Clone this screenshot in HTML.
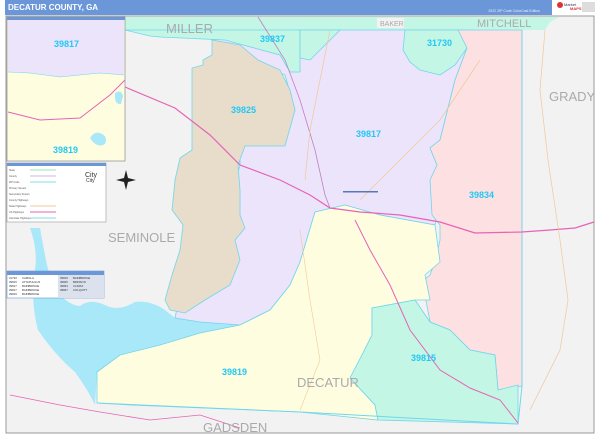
<!DOCTYPE html>
<html><head><meta charset="utf-8"><style>
html,body{margin:0;padding:0;background:#fff;}
svg{display:block;}
text{font-family:"Liberation Sans",sans-serif;}
.z{fill:#22c8f4;font-weight:bold;font-size:9px;}
.c{fill:#aaa;font-size:13px;}
</style></head><body>
<svg width="600" height="438" viewBox="0 0 600 438" xmlns="http://www.w3.org/2000/svg">
<rect width="600" height="438" fill="#fff"/>
<rect x="5" y="0" width="547" height="15" fill="#6b97d9"/>
<text x="8" y="10" fill="#fff" font-size="8" font-weight="bold">DECATUR COUNTY, GA</text>
<text x="540" y="12" fill="#e8efff" font-size="3.5" text-anchor="end">2022 ZIP Code ColorCast Edition</text>
<rect x="553" y="1" width="44" height="13" fill="#fff"/>
<circle cx="560" cy="5" r="3" fill="#d33"/>
<text x="564" y="6" font-size="4" fill="#336">Market</text>
<text x="570" y="10" font-size="4" fill="#d33" font-weight="bold">MAPS</text>
<rect x="582" y="2" width="13" height="10" fill="#ddd"/>
<rect x="6" y="16" width="588" height="417" fill="#f2f2f2" stroke="#999" stroke-width="1"/>
<rect x="125" y="17" width="434" height="13" fill="#c4f6e6"/>
<polygon points="559,17 593,17 593,30 560,30 545,30 550,22" fill="#f2f2f2"/>
<!-- lake -->
<path d="M30,228 Q38,250 35,270 Q30,300 38,330 Q55,355 75,372 Q88,390 95,405 L97,372 Q120,355 160,345 Q200,333 240,325 L175,318 L165,310 Q150,300 135,302 Q118,312 105,305 Q90,298 80,306 Q68,305 58,292 Q48,275 45,255 Q42,240 40,228 Z" fill="#a8e8f8"/>
<!-- purple 39817 -->
<polygon points="212,40 300,30 400,30 470,30 467,48 455,80 440,140 430,148 437,165 432,182 440,200 435,225 380,215 345,205 315,212 300,262 290,285 270,310 240,325 200,322 175,318 185,270 200,250 205,220 230,200 240,165 240,145 285,145 295,110 285,75" fill="#ebe4fb" stroke="#6fd6ec" stroke-width="0.8"/>
<polygon points="125,30 300,30 300,72 290,72 280,55 225,40 160,37 150,36" fill="#c4f6e6" stroke="#6fd6ec" stroke-width="0.8"/>
<polygon points="300,30 340,30 310,60 300,58" fill="#c4f6e6" stroke="#6fd6ec" stroke-width="0.8"/>
<polygon points="405,30 470,30 467,48 455,65 440,75 420,70 410,62 403,50" fill="#c4f6e6" stroke="#6fd6ec" stroke-width="0.8"/>
<!-- tan 39825 -->
<polygon points="212,40 212,55 203,60 203,65 192,68 192,150 180,158 175,180 172,210 178,218 183,225 180,250 172,275 165,300 170,310 185,313 205,300 230,285 240,260 235,240 245,228 240,215 240,190 238,165 245,146 285,146 295,110 290,90 280,70 258,60 240,45" fill="#e8dccb" stroke="#6fd6ec" stroke-width="0.8"/>
<!-- pink -->
<polygon points="458,30 522,30 522,386 498,390 495,355 470,350 450,330 430,322 425,295 418,285 430,275 435,262 440,240 440,225 432,215 430,180 437,165 430,148 440,140 455,80 467,48" fill="#fde0e2" stroke="#6fd6ec" stroke-width="0.8"/>
<!-- yellow -->
<polygon points="315,212 345,205 380,215 435,225 440,262 425,275 430,300 415,300 372,308 372,335 362,355 350,378 375,405 378,420 300,412 130,405 97,403 97,372 120,355 160,345 200,333 240,325 270,310 290,285 300,262" fill="#fffde0" stroke="#6fd6ec" stroke-width="0.8"/>
<!-- green 39815 -->
<polygon points="372,308 415,300 430,322 450,330 470,350 495,355 498,390 518,385 518,424 378,420 375,405 350,378 362,355 372,335" fill="#c4f6e6" stroke="#6fd6ec" stroke-width="0.8"/>
<polyline points="97,403 300,412 518,424 522,386 522,30" fill="none" stroke="#6fd6ec" stroke-width="1"/>
<!-- roads -->
<polyline points="125,87 175,108 210,135 240,165 280,180 310,195 330,208 360,212 400,215 440,222 475,233 522,232 550,230 575,228 594,222" fill="none" stroke="#e663b6" stroke-width="1.2"/>
<polyline points="258,17 285,60 300,100 315,150 325,195 330,208" fill="none" stroke="#c080c0" stroke-width="0.8"/>
<polyline points="355,220 370,250 390,285 410,330 440,370 470,388 500,400 518,423" fill="none" stroke="#e663b6" stroke-width="1"/>
<polyline points="10,395 60,405 100,412 150,420 200,415 240,428" fill="none" stroke="#e663b6" stroke-width="0.8"/>
<polyline points="330,30 320,80 310,130 305,180" fill="none" stroke="#f0c89a" stroke-width="0.7"/>
<polyline points="480,60 440,120 400,160 360,200" fill="none" stroke="#f0c89a" stroke-width="0.7"/>
<polyline points="545,30 540,90 548,160 560,240 568,300 560,350 530,410" fill="none" stroke="#f0c89a" stroke-width="0.7"/>
<polyline points="300,230 310,300 320,360 300,410" fill="none" stroke="#f0c89a" stroke-width="0.6"/>
<rect x="343" y="191" width="35" height="1.5" fill="#5577bb"/>
<!-- inset -->
<rect x="7" y="17" width="118" height="144" fill="#fffde0" stroke="#999" stroke-width="0.8"/>
<polygon points="8,18 124,18 124,75 100,73 60,77 30,73 8,72" fill="#ebe4fb"/>
<polyline points="8,72 30,73 60,77 100,73 124,75" fill="none" stroke="#6fd6ec" stroke-width="0.6"/>
<rect x="7" y="17" width="118" height="3" fill="#6b97d9"/>
<polyline points="8,112 40,120 80,118 110,95 125,80" fill="none" stroke="#e663b6" stroke-width="1"/>
<path d="M90,138 q5,-8 12,-4 q6,3 3,10 q-8,5 -15,-6z" fill="#a8e8f8"/>
<path d="M115,93 q6,-4 8,3 l-2,8 q-7,1 -6,-11z" fill="#a8e8f8"/>
<text class="z" x="54" y="47">39817</text>
<text class="z" x="53" y="153">39819</text>
<!-- legend -->
<rect x="7" y="163" width="99" height="59" fill="#fff" stroke="#999" stroke-width="0.6"/>
<rect x="7" y="163" width="99" height="3" fill="#6b97d9"/>
<g font-size="2.5" fill="#555">
<text x="9" y="171">State</text><text x="9" y="177">County</text><text x="9" y="183">ZIP Code</text><text x="9" y="189">Primary Streets</text><text x="9" y="195">Secondary Streets</text><text x="9" y="201">County Highways</text><text x="9" y="207">State Highways</text><text x="9" y="213">US Highways</text><text x="9" y="219">Interstate Highways</text>
</g>
<g stroke-width="1"><line x1="30" y1="170" x2="56" y2="170" stroke="#9ee8b0"/><line x1="30" y1="176" x2="56" y2="176" stroke="#d9b0e0"/><line x1="30" y1="182" x2="56" y2="182" stroke="#7fdcea"/><line x1="30" y1="206" x2="56" y2="206" stroke="#f0c89a"/><line x1="30" y1="212" x2="56" y2="212" stroke="#e663b6"/><line x1="30" y1="218" x2="56" y2="218" stroke="#7fdcea"/></g>
<text x="85" y="177" font-size="7" fill="#333">City</text>
<text x="86" y="182" font-size="5" fill="#333">City</text>
<path d="M126,170 L128,178 L136,180 L128,182 L126,190 L124,182 L116,180 L124,178 Z" fill="#222"/>
<!-- zip table -->
<rect x="7" y="271" width="97" height="27" fill="#fff" stroke="#6b97d9" stroke-width="0.6"/>
<rect x="7" y="271" width="97" height="4" fill="#6b97d9"/>
<rect x="58" y="275" width="46" height="23" fill="#dbe2ee"/>
<g font-size="2.8" fill="#333"><text x="9" y="279">31730</text><text x="22" y="279">CAMILLA</text><text x="9" y="283">39815</text><text x="22" y="283">ATTAPULGUS</text><text x="9" y="287">39817</text><text x="22" y="287">BAINBRIDGE</text><text x="9" y="291">39817</text><text x="22" y="291">BAINBRIDGE</text><text x="9" y="295">39819</text><text x="22" y="295">BAINBRIDGE</text><text x="60" y="279">39819</text><text x="73" y="279">BAINBRIDGE</text><text x="60" y="283">39825</text><text x="73" y="283">BRINSON</text><text x="60" y="287">39834</text><text x="73" y="287">CLIMAX</text><text x="60" y="291">39837</text><text x="73" y="291">COLQUITT</text></g>
<text class="c" x="166" y="33">MILLER</text>
<rect x="377" y="18" width="27" height="10" fill="#f2f2f2"/>
<text x="380" y="26" font-size="7" fill="#aaa">BAKER</text>
<text class="c" x="477" y="27" style="font-size:11px">MITCHELL</text>
<text class="c" x="549" y="101">GRADY</text>
<text class="c" x="108" y="242">SEMINOLE</text>
<text class="c" x="297" y="387">DECATUR</text>
<text class="c" x="203" y="432">GADSDEN</text>
<text class="z" x="260" y="42">39837</text>
<text class="z" x="427" y="46">31730</text>
<text class="z" x="231" y="113">39825</text>
<text class="z" x="356" y="137">39817</text>
<text class="z" x="469" y="198">39834</text>
<text class="z" x="222" y="375">39819</text>
<text class="z" x="411" y="361">39815</text>
</svg>
</body></html>
